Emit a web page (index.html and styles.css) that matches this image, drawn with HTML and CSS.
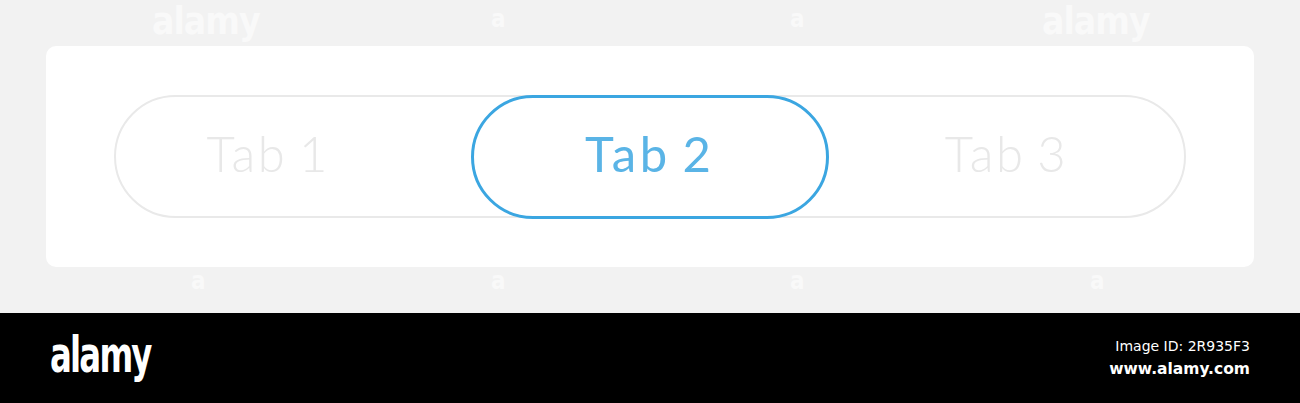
FILE: index.html
```html
<!DOCTYPE html>
<html>
<head>
<meta charset="utf-8">
<link rel="stylesheet" href="styles.css">
</head>
<body>
<div class="stage">
  <div class="card">
    <div class="tabs">
      <div class="tab tab-first">Tab 1</div>
      <div class="tab tab-active">Tab 2</div>
      <div class="tab">Tab 3</div>
    </div>
  </div>
  <span class="wm wm-big wm-a">alamy</span>
  <span class="wm wm-small wm-b">a</span>
  <span class="wm wm-small wm-c">a</span>
  <span class="wm wm-big wm-d">alamy</span>
  <span class="wm wm-small wm-e">a</span>
  <span class="wm wm-small wm-f">a</span>
  <span class="wm wm-small wm-g">a</span>
  <span class="wm wm-small wm-h">a</span>
</div>
<div class="footer">
  <div class="logo">alamy</div>
  <div class="meta">
    <div class="meta-id">Image ID: 2R935F3</div>
    <div class="meta-url">www.alamy.com</div>
  </div>
</div>
</body>
</html>
```

FILE: styles.css
```css
html, body {
  margin: 0;
  padding: 0;
}
body {
  width: 1300px;
  height: 403px;
  overflow: hidden;
  background: #f2f2f2;
  font-family: "Lato", "Liberation Sans", sans-serif;
}
.stage {
  position: relative;
  height: 313px;
  padding: 46px 46px 0;
  box-sizing: border-box;
}
.wm {
  position: absolute;
  z-index: 1;
  color: #f9f9f9;
  font-family: "DejaVu Sans Condensed", "Liberation Sans Narrow", sans-serif;
  font-weight: bold;
  line-height: 1.2;
}
.wm-big {
  font-size: 37px;
  letter-spacing: -1px;
  top: 0;
}
.wm-small {
  font-size: 24px;
}
.wm-a { left: 152px; }
.wm-d { left: 1042px; }
.wm-b { left: 491px; top: 5px; }
.wm-c { left: 790px; top: 5px; }
.wm-e { left: 191px; top: 267px; }
.wm-f { left: 491px; top: 267px; }
.wm-g { left: 790px; top: 267px; }
.wm-h { left: 1090px; top: 267px; }
.card {
  position: relative;
  background: #ffffff;
  border-radius: 10px;
  height: 221px;
  padding: 49px 68px;
  box-sizing: border-box;
}
.tabs {
  display: grid;
  grid-template-columns: 354.5px 358.5px 1fr;
  height: 123px;
  border: 2.5px solid #e9e9e9;
  border-radius: 62px;
  box-sizing: border-box;
}
.tab {
  display: flex;
  align-items: center;
  justify-content: center;
  font-size: 49px;
  font-weight: 300;
  letter-spacing: 2.5px;
  word-spacing: -4px;
  color: #e8e8e8;
  margin: -2.5px 0;
  padding-bottom: 7px;
  box-sizing: border-box;
}
.tab-first {
  padding-right: 50px;
}
.tab-active {
  border: 3px solid #3ba6e1;
  border-radius: 62px;
  color: #5ab4e6;
  font-weight: 400;
  letter-spacing: 3.5px;
}
.footer {
  height: 90px;
  background: #000;
  display: flex;
  align-items: center;
  justify-content: space-between;
  padding: 0 50px 0 50px;
  box-sizing: border-box;
}
.logo {
  color: #fff;
  font-family: "DejaVu Sans Condensed", "Liberation Sans Narrow", sans-serif;
  font-weight: bold;
  font-size: 50px;
  letter-spacing: -2.5px;
  transform: scaleX(0.72);
  transform-origin: left center;
  margin-top: -6px;
}
.meta {
  display: flex;
  flex-direction: column;
  align-items: flex-end;
  font-family: "DejaVu Sans", sans-serif;
  color: #fff;
  margin-top: 2px;
}
.meta-id {
  font-size: 14px;
  line-height: 20px;
}
.meta-url {
  font-size: 15.5px;
  font-weight: bold;
  line-height: 26px;
}
```
